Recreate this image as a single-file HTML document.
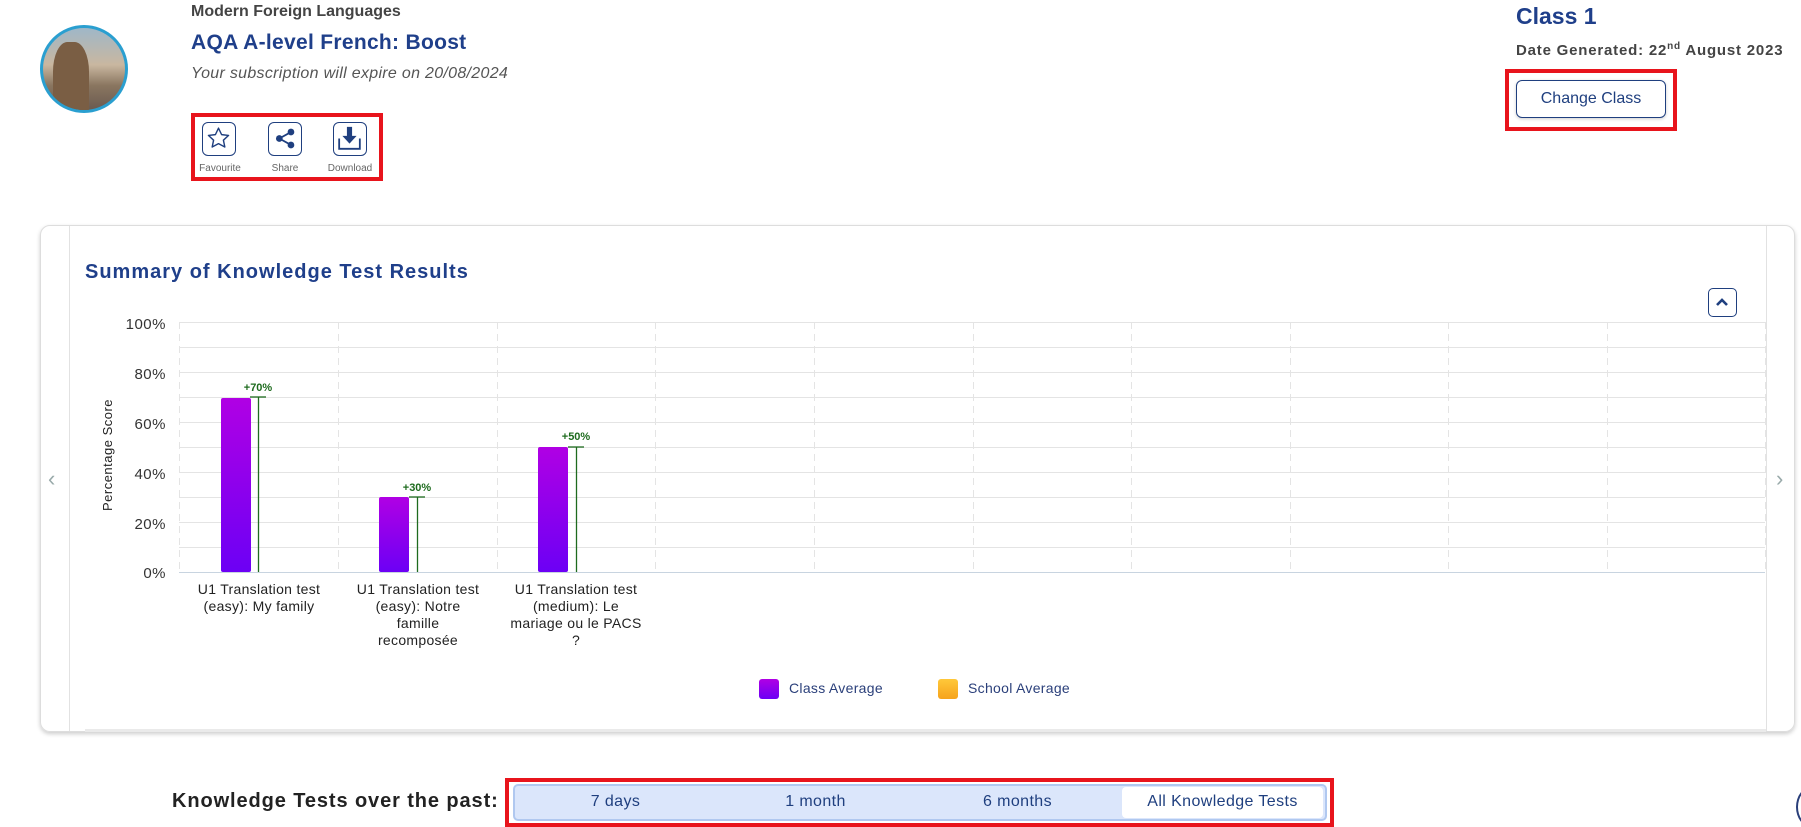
<!DOCTYPE html>
<html><head><meta charset="utf-8"><style>
*{margin:0;padding:0;box-sizing:border-box}
body{width:1801px;height:827px;overflow:hidden;background:#fff;font-family:"Liberation Sans",sans-serif;position:relative;color:#333}
.a{position:absolute;white-space:nowrap}
.navy{color:#1f3f7f}
.red{position:absolute;border:4px solid #e8141c}
.ib{position:absolute;width:34px;height:34px;border:1.6px solid #1f3f7f;border-radius:6px;background:#fff}
.il{position:absolute;font-size:10px;color:#666;width:60px;text-align:center}
</style></head><body>
<div class="a" style="left:40px;top:25px;width:88px;height:88px;border-radius:50%;border:3px solid #2a9fd0;background:linear-gradient(180deg,#9fb7c8 0%,#c9b7a0 45%,#8a7660 70%,#6a5a50 100%);overflow:hidden">
<div style="position:absolute;left:10px;top:14px;width:36px;height:74px;background:#7a5e44;border-radius:40% 40% 0 0"></div></div>
<div class="a" style="left:191px;top:3px;font-size:16px;font-weight:bold;color:#444">Modern Foreign Languages</div>
<div class="a navy" style="left:191px;top:31px;font-size:21px;font-weight:bold;color:#1f3f8a;letter-spacing:0.3px">AQA A-level French: Boost</div>
<div class="a" style="left:191px;top:65px;font-size:16px;font-style:italic;color:#555;letter-spacing:0.3px">Your subscription will expire on 20/08/2024</div>
<div class="red" style="left:191px;top:113px;width:192px;height:68px"></div>
<div class="ib" style="left:202px;top:122px"><svg width="31" height="31" viewBox="0 0 24 24"><path d="M12 4l2.4 5 5.4.6-4 3.7 1.1 5.3L12 16l-4.9 2.6 1.1-5.3-4-3.7 5.4-.6z" fill="none" stroke="#1f3f7f" stroke-width="1.1" stroke-linejoin="round"/></svg></div>
<div class="ib" style="left:268px;top:122px"><svg width="31" height="31" viewBox="0 0 24 24"><circle cx="17" cy="7" r="2.6" fill="#1f3f7f"/><circle cx="17" cy="17" r="2.6" fill="#1f3f7f"/><circle cx="8" cy="12" r="2.6" fill="#1f3f7f"/><path d="M8 12L17 7M8 12l9 5" stroke="#1f3f7f" stroke-width="1.4"/></svg></div>
<div class="ib" style="left:333px;top:122px"><svg width="31" height="31" viewBox="0 0 24 24"><path d="M4 12v8h16v-8" fill="none" stroke="#1f3f7f" stroke-width="1.4"/><path d="M10 3h4v7h3.5L12 16 6.5 10H10z" fill="#1f3f7f"/></svg></div>
<div class="il" style="left:190px;top:163px">Favourite</div>
<div class="il" style="left:255px;top:163px">Share</div>
<div class="il" style="left:320px;top:163px">Download</div>

<div class="a" style="left:1516px;top:3px;font-size:23px;font-weight:bold;color:#1f3f8a">Class 1</div>
<div class="a" style="left:1516px;top:41px;font-size:15px;font-weight:bold;color:#444;letter-spacing:0.8px">Date Generated: 22<sup style="font-size:10px">nd</sup> August 2023</div>
<div class="red" style="left:1505px;top:69px;width:172px;height:62px"></div>
<div class="a" style="left:1516px;top:80px;width:150px;height:38px;border:1.5px solid #1f3f7f;border-radius:6px;font-size:16px;color:#1f3f7f;text-align:center;line-height:35px;box-shadow:0 1px 3px rgba(0,0,0,.2)">Change Class</div>

<div class="a" style="left:40px;top:225px;width:1755px;height:507px;border:1px solid #ddd;border-radius:10px;box-shadow:0 2px 4px rgba(0,0,0,.2)"></div>
<div class="a" style="left:69px;top:226px;width:1px;height:505px;background:#e2e2e2"></div>
<div class="a" style="left:1766px;top:226px;width:1px;height:505px;background:#e2e2e2"></div>
<div class="a" style="left:85px;top:729px;width:1681px;height:3px;background:#eaeaea"></div>
<div class="a" style="left:85px;top:261px;font-size:20px;font-weight:bold;color:#1f3f8a;letter-spacing:1px">Summary of Knowledge Test Results</div>
<div class="a" style="left:1708px;top:288px;width:29px;height:29px;border:1.5px solid #1f3f7f;border-radius:5px"><svg width="26" height="26" viewBox="0 0 26 26"><path d="M8 16l5-5 5 5" fill="none" stroke="#1f3f7f" stroke-width="2.6"/></svg></div>
<div class="a" style="left:48px;top:466px;font-size:22px;color:#9aa">‹</div>
<div class="a" style="left:1776px;top:466px;font-size:22px;color:#9aa">›</div>

<svg class="a" style="left:0;top:0" width="1801" height="827">
<defs><linearGradient id="g" x1="0" y1="0" x2="0" y2="1"><stop offset="0" stop-color="#b000e4"/><stop offset="1" stop-color="#6c00f5"/></linearGradient>
<linearGradient id="y" x1="0" y1="0" x2="0" y2="1"><stop offset="0" stop-color="#ffc83a"/><stop offset="1" stop-color="#f6a31c"/></linearGradient></defs>
<g stroke="#e4e4e4" stroke-width="1">
<line x1="179" y1="322.5" x2="1765" y2="322.5"/><line x1="179" y1="347.5" x2="1765" y2="347.5"/><line x1="179" y1="372.5" x2="1765" y2="372.5"/><line x1="179" y1="397.5" x2="1765" y2="397.5"/><line x1="179" y1="422.5" x2="1765" y2="422.5"/><line x1="179" y1="447.5" x2="1765" y2="447.5"/><line x1="179" y1="472.5" x2="1765" y2="472.5"/><line x1="179" y1="497.5" x2="1765" y2="497.5"/><line x1="179" y1="522.5" x2="1765" y2="522.5"/><line x1="179" y1="547.5" x2="1765" y2="547.5"/>
</g>
<g stroke="#e4e4e4" stroke-dasharray="7,5">
<line x1="179.5" y1="322" x2="179.5" y2="572"/><line x1="338.5" y1="322" x2="338.5" y2="572"/><line x1="497.5" y1="322" x2="497.5" y2="572"/><line x1="655.5" y1="322" x2="655.5" y2="572"/><line x1="814.5" y1="322" x2="814.5" y2="572"/><line x1="973.5" y1="322" x2="973.5" y2="572"/><line x1="1131.5" y1="322" x2="1131.5" y2="572"/><line x1="1290.5" y1="322" x2="1290.5" y2="572"/><line x1="1448.5" y1="322" x2="1448.5" y2="572"/><line x1="1607.5" y1="322" x2="1607.5" y2="572"/><line x1="1765.5" y1="322" x2="1765.5" y2="572"/>
</g>
<line x1="179" y1="572.5" x2="1765" y2="572.5" stroke="#c8d4e0"/>
<g font-family="Liberation Sans" font-size="15" fill="#333" text-anchor="end" letter-spacing="0.5">
<text x="166" y="329">100%</text><text x="166" y="379">80%</text><text x="166" y="429">60%</text><text x="166" y="479">40%</text><text x="166" y="529">20%</text><text x="166" y="578">0%</text></g>
<text transform="translate(112,455) rotate(-90)" text-anchor="middle" font-family="Liberation Sans" font-size="13" fill="#222" letter-spacing="0.5">Percentage Score</text>
<rect x="221" y="398" width="30" height="174" rx="2" fill="url(#g)"/>
<rect x="379" y="497" width="30" height="75" rx="2" fill="url(#g)"/>
<rect x="538" y="447" width="30" height="125" rx="2" fill="url(#g)"/>
<g stroke="#1e6b1e" stroke-width="1.3">
<line x1="258.5" y1="397" x2="258.5" y2="572"/><line x1="250" y1="397" x2="266" y2="397"/>
<line x1="417.5" y1="497" x2="417.5" y2="572"/><line x1="409" y1="497" x2="425" y2="497"/>
<line x1="576.5" y1="447" x2="576.5" y2="572"/><line x1="568" y1="447" x2="584" y2="447"/></g>
<g font-family="Liberation Sans" font-size="11" font-weight="bold" fill="#1e6b1e" text-anchor="middle">
<text x="258" y="391">+70%</text><text x="417" y="491">+30%</text><text x="576" y="440">+50%</text></g>
<g font-family="Liberation Sans" font-size="14" fill="#222" text-anchor="middle" letter-spacing="0.3">
<text x="259" y="594">U1 Translation test</text><text x="259" y="611">(easy): My family</text>
<text x="418" y="594">U1 Translation test</text><text x="418" y="611">(easy): Notre</text><text x="418" y="628">famille</text><text x="418" y="645">recomposée</text>
<text x="576" y="594">U1 Translation test</text><text x="576" y="611">(medium): Le</text><text x="576" y="628">mariage ou le PACS</text><text x="576" y="645">?</text></g>
<rect x="759" y="679" width="20" height="20" rx="3" fill="url(#g)"/>
<rect x="938" y="679" width="20" height="20" rx="3" fill="url(#y)"/>
<g font-family="Liberation Sans" font-size="14" fill="#2a3f7a" letter-spacing="0.3"><text x="789" y="693">Class Average</text><text x="968" y="693">School Average</text></g>
</svg>

<div class="a" style="left:172px;top:790px;font-size:20px;font-weight:bold;color:#222;letter-spacing:0.9px">Knowledge Tests over the past:</div>
<div class="red" style="left:505px;top:778px;width:829px;height:49px"></div>
<div class="a" style="left:513px;top:784px;width:814px;height:37px;background:#dbe6fb;border:2px solid #b0c8f0;border-radius:5px"></div>
<div class="a" style="left:1122px;top:787px;width:201px;height:31px;background:#fff;border-radius:4px"></div>
<div class="a navy" style="left:513px;top:793px;width:205px;text-align:center;font-size:16px;letter-spacing:0.4px">7 days</div>
<div class="a navy" style="left:713px;top:793px;width:205px;text-align:center;font-size:16px;letter-spacing:0.4px">1 month</div>
<div class="a navy" style="left:915px;top:793px;width:205px;text-align:center;font-size:16px;letter-spacing:0.4px">6 months</div>
<div class="a navy" style="left:1122px;top:793px;width:201px;text-align:center;font-size:16px;letter-spacing:0.4px">All Knowledge Tests</div>
<div class="a" style="left:1796px;top:787px;width:30px;height:40px;border-radius:50%;border:2px solid #2a3f7a"></div>
</body></html>
